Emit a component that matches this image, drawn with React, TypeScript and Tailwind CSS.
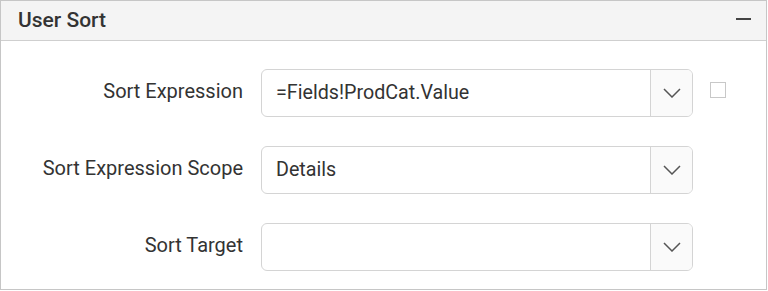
import React from "react";

function Chevron() {
  return (
    <svg width="18" height="10" viewBox="0 0 18 10" fill="none">
      <polyline points="1,1 9,9 17,1" stroke="#555" strokeWidth="1.5" fill="none" />
    </svg>
  );
}

function Select({ value }: { value: string }) {
  return (
    <div className="flex h-[48px] w-[432px] rounded-[6px] border border-[#d4d4d4] bg-white overflow-hidden">
      <div className="flex-1 flex items-center pl-[14px] text-[19.7px] text-[#333]">{value}</div>
      <div className="w-[42px] border-l border-[#d4d4d4] bg-[#fafafa] flex items-center justify-center">
        <Chevron />
      </div>
    </div>
  );
}

function Row({ label, value, checkbox }: { label: string; value: string; checkbox?: boolean }) {
  return (
    <div className="flex items-center">
      <div className="w-[242px] text-right text-[20px] text-[#333] -mt-[5px] whitespace-nowrap">{label}</div>
      <div className="ml-[18px]">
        <Select value={value} />
      </div>
      {checkbox && <div className="ml-[17px] -mt-[6px] w-[16px] h-[16px] border border-[#c8c8c8] bg-white" />}
    </div>
  );
}

export default function App() {
  return (
    <div className="w-[768px] h-[291px] bg-white" style={{ fontFamily: "Roboto, 'Noto Sans', sans-serif" }}>
      <div className="w-[767px] h-[290px] border border-[#c6c6c6] flex flex-col">
        <div className="h-[40px] bg-[#f4f4f4] border-b border-[#cfcfcf] flex items-center justify-between pl-[17px] pr-[15px]">
          <span className="text-[21px] font-medium text-[#333]">User Sort</span>
          <div className="w-[15px] h-[2px] bg-[#444] -mt-[4px]" />
        </div>
        <div className="flex flex-col gap-[29px] pt-[28px]">
          <Row label="Sort Expression" value="=Fields!ProdCat.Value" checkbox />
          <Row label="Sort Expression Scope" value="Details" />
          <Row label="Sort Target" value="" />
        </div>
      </div>
    </div>
  );
}
